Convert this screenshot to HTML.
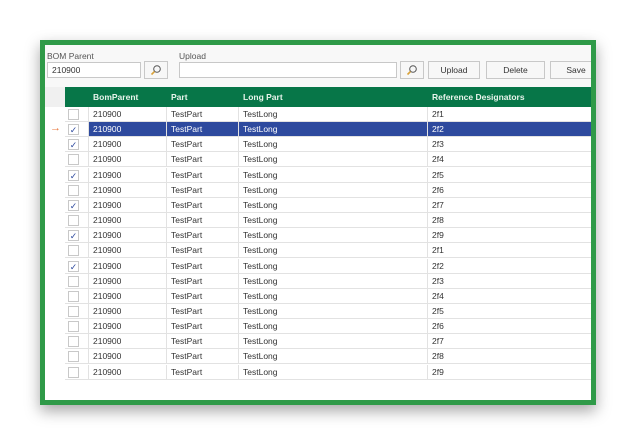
<!DOCTYPE html>
<html><head><style>
body{margin:0;width:635px;height:445px;background:#fff;position:relative;overflow:hidden;font-family:"Liberation Sans","DejaVu Sans",sans-serif;font-size:8.5px;color:#333}
.frame{position:absolute;left:40px;top:40px;width:546px;height:355px;border:5px solid #2f9a48;background:#fff;box-shadow:0 6px 14px rgba(0,0,0,.35);overflow:hidden}
.a{position:absolute}
.lbl{color:#555;font-size:8.5px}
.tb{background:#fff;border:1px solid #c8c8c8;box-sizing:border-box}
.btn{background:#f7f7f7;border:1px solid #c8c8c8;box-sizing:border-box;text-align:center;line-height:16px;color:#333}
.hdr{position:absolute;top:42px;height:20px;background:#077648;color:#e8f4ec;font-weight:bold;line-height:20px}
.row{position:absolute;left:20px;width:530px;height:15px;background:#fff;border-bottom:1px solid #e2e2e2;box-sizing:border-box;line-height:14px}
.row span{position:absolute;top:0}
.cb{position:absolute;left:3px;top:2px;width:11px;height:11px;border:1px solid #c8c8c8;background:#fff;box-sizing:border-box;color:#2e4a9e;font-size:9px;line-height:10px;text-align:center}
.vl{position:absolute;top:0;bottom:0;width:1px;background:#e2e2e2}
.sel{background:#2e4a9e;color:#fff}
</style></head><body>
<div class="frame">
<div class="a" style="left:0;top:0;width:546px;height:42px;background:#f8f8f8"></div>
<div class="a lbl" style="left:2px;top:6px">BOM Parent</div>
<div class="a tb" style="left:2px;top:17px;width:94px;height:16px;padding-left:4px;line-height:14px">210900</div>
<div class="a btn" style="left:99px;top:16px;width:24px;height:18px"><svg width="12" height="12" viewBox="0 0 12 12" style="margin-top:2px"><circle cx="7" cy="5" r="3.3" fill="none" stroke="#555" stroke-width="1"/><line x1="4.5" y1="7.5" x2="1.5" y2="10.5" stroke="#d9a23a" stroke-width="1.6"/></svg></div>
<div class="a lbl" style="left:134px;top:6px">Upload</div>
<div class="a tb" style="left:134px;top:17px;width:218px;height:16px"></div>
<div class="a btn" style="left:355px;top:16px;width:24px;height:18px"><svg width="12" height="12" viewBox="0 0 12 12" style="margin-top:2px"><circle cx="7" cy="5" r="3.3" fill="none" stroke="#555" stroke-width="1"/><line x1="4.5" y1="7.5" x2="1.5" y2="10.5" stroke="#d9a23a" stroke-width="1.6"/></svg></div>
<div class="a btn" style="left:383px;top:16px;width:52px;height:18px">Upload</div>
<div class="a btn" style="left:441px;top:16px;width:59px;height:18px">Delete</div>
<div class="a btn" style="left:505px;top:16px;width:52px;height:18px">Save</div>
<div class="a" style="left:0;top:42px;width:20px;height:20px;background:#f0f0f0"></div>
<div class="hdr" style="left:20px;width:530px"></div>
<div class="hdr" style="left:48px">BomParent</div>
<div class="hdr" style="left:126px">Part</div>
<div class="hdr" style="left:198px">Long Part</div>
<div class="hdr" style="left:387px">Reference Designators</div>
<div id="rows"></div>
<div class="a" style="left:5px;top:77px;color:#e8753a;font-size:11px">→</div>
</div>
<script>
var chk=[0,1,1,0,1,0,1,0,1,0,1,0,0,0,0,0,0,0];
var h='';
for(var i=0;i<18;i++){
 var t=62+i*15.15;var s=i==1;
 h+='<div class="row" style="top:'+t+'px"><div class="cb">'+(chk[i]?'✓':'')+'</div>'+
 '<div style="position:absolute;left:23px;top:0;width:507px;height:14px" class="'+(s?'sel':'')+'">'+
 '<span style="left:5px">210900</span><span style="left:83px">TestPart</span><span style="left:155px">TestLong</span><span style="left:344px">2f'+((i%9)+1)+'</span></div>'+
 '<div class="vl" style="left:23px"></div><div class="vl" style="left:101px"></div><div class="vl" style="left:173px"></div><div class="vl" style="left:362px"></div></div>';
}
document.getElementById('rows').outerHTML=h;
</script>
</body></html>
